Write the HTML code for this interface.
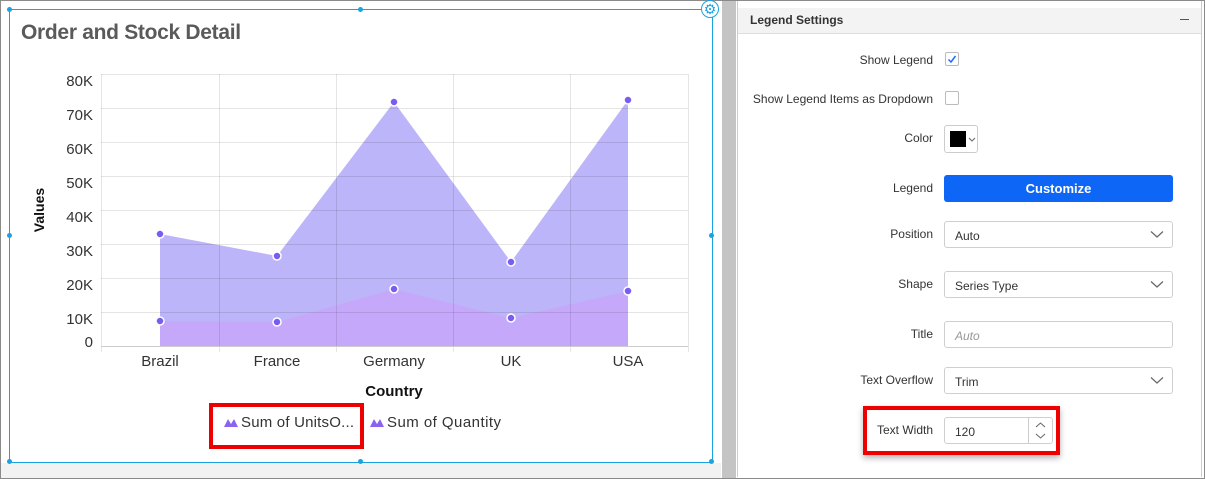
<!DOCTYPE html>
<html><head><meta charset="utf-8"><style>
body{margin:0;width:1205px;height:479px;overflow:hidden;background:#fff;font-family:"Liberation Sans",Arial,sans-serif;position:relative}
.abs{position:absolute}
.lbl{position:absolute;right:272px;font-size:12px;color:#333;text-align:right;white-space:nowrap}
.inp{position:absolute;left:944px;width:229px;height:27px;border:1px solid #cfcfcf;border-radius:3px;box-sizing:border-box;font-size:12px;color:#333;padding:7px 10px}
.chev{position:absolute;right:8px;top:8px}
</style></head><body>
<div class="abs" style="left:0;top:0;width:1203px;height:477px;border:1px solid #8a8a8a"></div>
<div class="abs" style="left:1px;top:463px;width:720px;height:15px;background:#f2f2f2"></div>
<div class="abs" style="left:722px;top:1px;width:14px;height:477px;background:#c4c4c4"></div>
<div class="abs" style="left:9px;top:9px;width:702px;height:452px;border:1px solid #1aa3e0"></div>
<div class="abs" style="left:7px;top:7px;width:5px;height:5px;border-radius:50%;background:#1aa3e0"></div>
<div class="abs" style="left:358px;top:7px;width:5px;height:5px;border-radius:50%;background:#1aa3e0"></div>
<div class="abs" style="left:7px;top:233px;width:5px;height:5px;border-radius:50%;background:#1aa3e0"></div>
<div class="abs" style="left:709px;top:233px;width:5px;height:5px;border-radius:50%;background:#1aa3e0"></div>
<div class="abs" style="left:7px;top:459px;width:5px;height:5px;border-radius:50%;background:#1aa3e0"></div>
<div class="abs" style="left:358px;top:459px;width:5px;height:5px;border-radius:50%;background:#1aa3e0"></div>
<div class="abs" style="left:709px;top:459px;width:5px;height:5px;border-radius:50%;background:#1aa3e0"></div>
<div class="abs" style="left:701px;top:0;width:18px;height:18px;border-radius:50%;background:#fff;border:1px solid #1aa3e0;box-sizing:border-box;color:#1aa3e0;font-size:14px;line-height:16px;text-align:center">⚙</div>
<div class="abs" style="left:21px;top:21px;font-size:21px;font-weight:bold;color:#5a5a5a;letter-spacing:-0.3px">Order and Stock Detail</div>
<svg class="abs" style="left:0;top:0" width="720" height="470">
<polygon points="160,234 277,256 394,102 511,262 628,100 628,346 160,346" fill="#bdb5f9"/>
<polygon points="160,321 277,322 394,289 511,318 628,291 628,346 160,346" fill="#c6a8fb"/>
<g stroke="rgba(0,0,0,0.1)" stroke-width="1">
<line x1="101" y1="74.5" x2="688" y2="74.5"/><line x1="101" y1="108.5" x2="688" y2="108.5"/><line x1="101" y1="142.5" x2="688" y2="142.5"/><line x1="101" y1="176.5" x2="688" y2="176.5"/><line x1="101" y1="210.5" x2="688" y2="210.5"/><line x1="101" y1="244.5" x2="688" y2="244.5"/><line x1="101" y1="278.5" x2="688" y2="278.5"/><line x1="101" y1="312.5" x2="688" y2="312.5"/>
<line x1="101.5" y1="74" x2="101.5" y2="352"/><line x1="219.5" y1="74" x2="219.5" y2="352"/><line x1="336.5" y1="74" x2="336.5" y2="352"/><line x1="453.5" y1="74" x2="453.5" y2="352"/><line x1="570.5" y1="74" x2="570.5" y2="352"/><line x1="688.5" y1="74" x2="688.5" y2="352"/>
</g>
<line x1="101" y1="346.5" x2="688" y2="346.5" stroke="#ccc"/>
<g fill="#7b5cf0" stroke="#fff" stroke-width="1.5">
<circle cx="160" cy="234" r="4"/><circle cx="277" cy="256" r="4"/><circle cx="394" cy="102" r="4"/><circle cx="511" cy="262" r="4"/><circle cx="628" cy="100" r="4"/>
<circle cx="160" cy="321" r="4"/><circle cx="277" cy="322" r="4"/><circle cx="394" cy="289" r="4"/><circle cx="511" cy="318" r="4"/><circle cx="628" cy="291" r="4"/>
</g>
<g font-family="Liberation Sans, Arial" font-size="15" fill="#333" text-anchor="end">
<text x="93" y="86">80K</text><text x="93" y="120">70K</text><text x="93" y="154">60K</text><text x="93" y="188">50K</text><text x="93" y="222">40K</text><text x="93" y="256">30K</text><text x="93" y="290">20K</text><text x="93" y="324">10K</text><text x="93" y="347">0</text>
</g>
<g font-family="Liberation Sans, Arial" font-size="15" fill="#333" text-anchor="middle">
<text x="160" y="366">Brazil</text><text x="277" y="366">France</text><text x="394" y="366">Germany</text><text x="511" y="366">UK</text><text x="628" y="366">USA</text>
</g>
<text x="394" y="396" font-family="Liberation Sans, Arial" font-size="15" font-weight="bold" text-anchor="middle" fill="#111">Country</text>
<text transform="translate(44,210) rotate(-90)" font-family="Liberation Sans, Arial" font-size="14" font-weight="bold" text-anchor="middle" fill="#111">Values</text>
<rect x="211" y="405" width="151" height="42" fill="none" stroke="#ee0000" stroke-width="4"/>
<polygon points="224,427 228,419 231,424 234,419 238,427" fill="#8a63f0"/>
<text x="241" y="427" font-family="Liberation Sans, Arial" font-size="15" fill="#333" textLength="113">Sum of UnitsO...</text>
<polygon points="370,427 374,419 377,424 380,419 384,427" fill="#8a63f0"/>
<text x="387" y="427" font-family="Liberation Sans, Arial" font-size="15" fill="#333" textLength="114">Sum of Quantity</text>
</svg>
<div class="abs" style="left:737px;top:1px;width:465px;height:476px;border-left:1px solid #ccc;border-right:1px solid #ccc;box-sizing:border-box"></div>
<div class="abs" style="left:738px;top:8px;width:463px;height:25px;background:#f3f3f3;border-bottom:1px solid #ddd"></div>
<div class="abs" style="left:750px;top:13px;font-size:12px;font-weight:bold;color:#333">Legend Settings</div>
<div class="abs" style="left:1180px;top:19px;width:9px;height:1px;background:#555"></div>
<div class="lbl" style="top:53px">Show Legend</div>
<div class="abs" style="left:945px;top:52px;width:12px;height:12px;border:1px solid #bbb;border-radius:2px"><svg width="12" height="12" style="position:absolute;left:0;top:0"><path d="M2.5 6.5 L5 9 L9.5 3" fill="none" stroke="#1a6bff" stroke-width="1.5"/></svg></div>
<div class="lbl" style="top:92px">Show Legend Items as Dropdown</div>
<div class="abs" style="left:945px;top:91px;width:12px;height:12px;border:1px solid #bbb;border-radius:2px"></div>
<div class="lbl" style="top:131px">Color</div>
<div class="abs" style="left:944px;top:125px;width:34px;height:28px;border:1px solid #ccc;border-radius:3px;box-sizing:border-box"><div style="position:absolute;left:5px;top:5px;width:16px;height:16px;background:#000"></div><svg width="8" height="6" style="position:absolute;left:23px;top:11px"><path d="M1 1 L4 4 L7 1" fill="none" stroke="#666"/></svg></div>
<div class="lbl" style="top:181px">Legend</div>
<div class="abs" style="left:944px;top:175px;width:229px;height:27px;background:#0d66f5;border-radius:3px;color:#fff;font-size:13px;font-weight:bold;text-align:center;line-height:27px">Customize</div>
<div class="lbl" style="top:227px">Position</div>
<div class="inp" style="top:221px">Auto<svg class="chev" width="14" height="9"><path d="M1 1.5 L7 7 L13 1.5" fill="none" stroke="#666" stroke-width="1.2"/></svg></div>
<div class="lbl" style="top:277px">Shape</div>
<div class="inp" style="top:271px">Series Type<svg class="chev" width="14" height="9"><path d="M1 1.5 L7 7 L13 1.5" fill="none" stroke="#666" stroke-width="1.2"/></svg></div>
<div class="lbl" style="top:327px">Title</div>
<div class="inp" style="top:321px;color:#999;font-style:italic">Auto</div>
<div class="lbl" style="top:373px">Text Overflow</div>
<div class="inp" style="top:367px">Trim<svg class="chev" width="14" height="9"><path d="M1 1.5 L7 7 L13 1.5" fill="none" stroke="#666" stroke-width="1.2"/></svg></div>
<div class="abs" style="left:863px;top:406px;width:197px;height:49px;border:4px solid #ee0000;box-sizing:border-box;box-shadow:0 3px 6px rgba(0,0,0,0.3)"></div>
<div class="lbl" style="top:423px">Text Width</div>
<div class="inp" style="top:417px;width:109px">120<div style="position:absolute;right:0;top:0;width:23px;height:25px;border-left:1px solid #ccc"><svg width="23" height="25"><path d="M7 9 L11.5 5 L16 9" fill="none" stroke="#666"/><path d="M7 16 L11.5 20 L16 16" fill="none" stroke="#666"/></svg></div></div>
</body></html>
